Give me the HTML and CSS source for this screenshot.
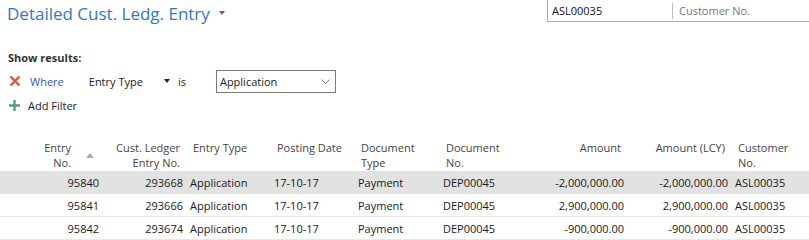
FILE: index.html
```html
<!DOCTYPE html>
<html>
<head>
<meta charset="utf-8">
<link rel="stylesheet" href="styles.css">
</head>
<body>
<div class="topbar">
  <div class="title">Detailed Cust. Ledg. Entry <span class="title-caret"></span></div>
  <div class="search">
    <span class="search-value">ASL00035</span>
    <span class="search-field">Customer No.</span>
  </div>
</div>
<div class="filters">
  <div class="show">Show results:</div>
  <div class="filter-row">
    <svg class="x-icon" width="12" height="12" viewBox="0 0 12 12"><path d="M1.5 1.5 L10.5 10.5 M10.5 1.5 L1.5 10.5" stroke="#e0542d" stroke-width="2.4" fill="none"/></svg>
    <span class="where">Where</span>
    <span class="field">Entry Type</span>
    <span class="field-caret"></span>
    <span class="is">is</span>
    <div class="select"><span>Application</span>
      <svg class="chev" width="9" height="5" viewBox="0 0 9 5"><path d="M0.5 0.5 L4.5 4.5 L8.5 0.5" stroke="#777" stroke-width="1" fill="none"/></svg>
    </div>
  </div>
  <div class="add-row">
    <svg class="plus" width="11" height="11" viewBox="0 0 11 11"><path d="M5.5 0 V11 M0 5.5 H11" stroke="#5b9c83" stroke-width="2.4" fill="none"/></svg>
    <span>Add Filter</span>
  </div>
</div>
<table class="grid">
  <colgroup>
    <col style="width:102px"><col style="width:84px"><col style="width:84px"><col style="width:84px"><col style="width:85px"><col style="width:101px"><col style="width:87px"><col style="width:104px"><col style="width:78px">
  </colgroup>
  <thead>
    <tr>
      <th class="r"><div class="sorthead"><span>Entry<br>No.</span><span class="sort"></span></div></th>
      <th class="r">Cust. Ledger<br>Entry No.</th>
      <th>Entry Type</th>
      <th>Posting Date</th>
      <th>Document<br>Type</th>
      <th>Document<br>No.</th>
      <th class="r">Amount</th>
      <th class="r">Amount (LCY)</th>
      <th>Customer<br>No.</th>
    </tr>
  </thead>
  <tbody>
    <tr class="sel">
      <td class="r">95840</td><td class="r">293668</td><td>Application</td><td>17-10-17</td><td>Payment</td><td>DEP00045</td><td class="r">-2,000,000.00</td><td class="r">-2,000,000.00</td><td>ASL00035</td>
    </tr>
    <tr>
      <td class="r">95841</td><td class="r">293666</td><td>Application</td><td>17-10-17</td><td>Payment</td><td>DEP00045</td><td class="r">2,900,000.00</td><td class="r">2,900,000.00</td><td>ASL00035</td>
    </tr>
    <tr>
      <td class="r">95842</td><td class="r">293674</td><td>Application</td><td>17-10-17</td><td>Payment</td><td>DEP00045</td><td class="r">-900,000.00</td><td class="r">-900,000.00</td><td>ASL00035</td>
    </tr>
  </tbody>
</table>
</body>
</html>
```
FILE: styles.css
```css
html, body {
  margin: 0;
  padding: 0;
  background: #fff;
  font-family: "Open Sans", "Noto Sans", sans-serif;
  font-size: 11px;
  color: #222;
  overflow: hidden;
}
.topbar {
  display: flex;
  justify-content: space-between;
  align-items: flex-start;
  height: 30px;
}
.title {
  font-size: 17px;
  color: #2f78c8;
  padding: 2px 0 0 7px;
  line-height: 24px;
  display: flex;
  align-items: center;
}
.title-caret {
  display: inline-block;
  width: 0;
  height: 0;
  border-left: 3.5px solid transparent;
  border-right: 3.5px solid transparent;
  border-top: 4px solid #666;
  margin-left: 9px;
  margin-top: -3px;
}
.search {
  width: 262px;
  height: 22px;
  border-left: 1px solid #aaa;
  border-bottom: 1px solid #aaa;
  display: flex;
  align-items: center;
  box-sizing: border-box;
}
.search-value {
  width: 120px;
  padding-left: 4px;
  color: #111;
  border-right: 1px solid #bbb;
  line-height: 16px;
}
.search-field {
  padding-left: 6px;
  color: #777;
}
.filters {
  padding-left: 8px;
}
.show {
  font-weight: bold;
  color: #333;
  margin-top: 20px;
  line-height: 16px;
}
.filter-row {
  display: flex;
  align-items: center;
  height: 24px;
  margin-top: 3px;
}
.x-icon {
  margin-left: 1px;
}
.where {
  color: #3355cc;
  margin-left: 9px;
}
.field {
  margin-left: 25px;
}
.field-caret {
  width: 0;
  height: 0;
  border-left: 3.5px solid transparent;
  border-right: 3.5px solid transparent;
  border-top: 4px solid #222;
  margin-left: 21px;
}
.is {
  margin-left: 8px;
}
.select {
  margin-left: 30px;
  width: 120px;
  height: 23px;
  box-sizing: border-box;
  border: 1px solid #7a7a7a;
  display: flex;
  align-items: center;
  justify-content: space-between;
  padding: 0 5px 0 3px;
}
.add-row {
  display: flex;
  align-items: center;
  height: 20px;
  margin-top: 2px;
}
.plus {
  margin-left: 1px;
  margin-right: 8px;
}
.grid {
  margin-top: 21px;
  border-collapse: collapse;
  table-layout: fixed;
  width: 809px;
}
.grid th {
  font-weight: normal;
  color: #444;
  text-align: left;
  vertical-align: top;
  line-height: 15px;
  padding: 4px 3px 1px 7px;
  height: 30px;
  white-space: nowrap;
}
.grid th.r {
  text-align: right;
  padding: 4px 6px 1px 3px;
}
.sorthead {
  display: flex;
  justify-content: flex-end;
  align-items: center;
}
.sort {
  width: 0;
  height: 0;
  border-left: 4px solid transparent;
  border-right: 4px solid transparent;
  border-bottom: 5px solid #aaa;
  margin-left: 15px;
  margin-right: 1px;
}
.grid th.r .sorthead {
  margin-right: 1px;
}
.grid td {
  height: 22px;
  padding: 0 3px 0 4px;
  border-bottom: 1px solid #e8e8e8;
  white-space: nowrap;
  color: #1a1a1a;
}
.grid td.r {
  text-align: right;
  padding: 0 3px 0 2px;
}
.grid tr.sel td {
  background: #e2e2e2;
  border-bottom-color: #e2e2e2;
}
```
